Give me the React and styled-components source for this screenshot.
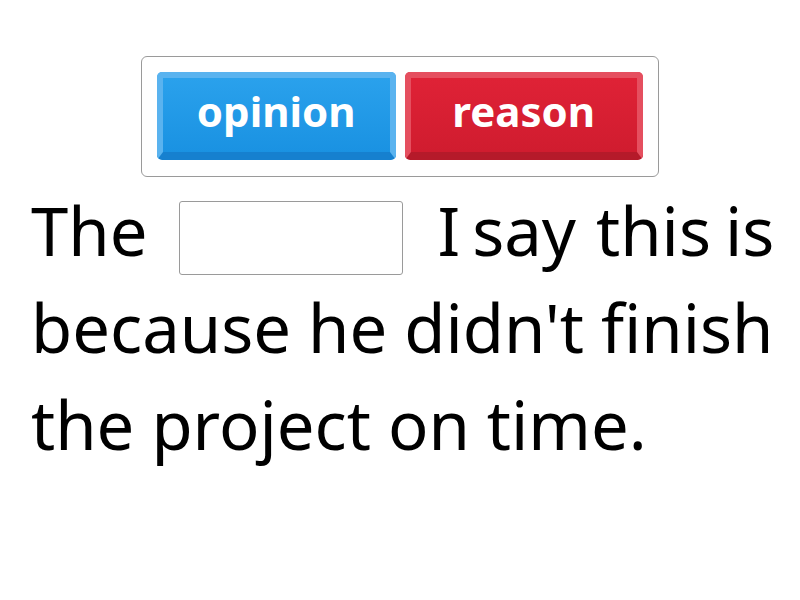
import React from "react";
import styled, { createGlobalStyle } from "styled-components";

const GlobalStyle = createGlobalStyle`
  html, body {
    margin: 0;
    padding: 0;
    background: #fff;
    font-family: "Noto Sans", "Open Sans", sans-serif;
  }
`;

const Page = styled.div`
  width: 800px;
  height: 600px;
  padding-top: 56px;
  box-sizing: border-box;
`;

const Tray = styled.div`
  width: 518px;
  height: 121px;
  margin-left: 141px;
  box-sizing: border-box;
  border: 1px solid #9a9a9a;
  border-radius: 6px;
  display: flex;
  gap: 9px;
  padding: 15px 15px 0;
`;

const palette = {
  blue: { edge: "#5ab3ef", face: "#2aa1ec", low: "#1a92e2", bottom: "#1680cf" },
  red: { edge: "#e54f5f", face: "#df2236", low: "#d01c2f", bottom: "#b51a2a" },
};

const Tile = styled.div`
  width: 239px;
  height: 88px;
  box-sizing: border-box;
  border-radius: 5px;
  border: 6px solid ${(p) => palette[p.$tone].edge};
  border-bottom: 8px solid ${(p) => palette[p.$tone].bottom};
  background: linear-gradient(
    ${(p) => palette[p.$tone].face},
    ${(p) => palette[p.$tone].low}
  );
  color: #fff;
  font-weight: 700;
  font-size: 42px;
  display: flex;
  align-items: center;
  justify-content: center;
  padding-bottom: 9px;
`;

const Sentence = styled.div`
  display: flex;
  flex-wrap: wrap;
  align-items: flex-start;
  column-gap: 17px;
  padding-left: 31px;
  margin-top: 5px;
  font-size: 67px;
  line-height: 97px;
  color: #000;
`;

const Word = styled.span`
  white-space: pre;
  margin-right: ${(p) => p.$after || 0}px;
`;

const Blank = styled.span`
  display: block;
  width: 224px;
  height: 74px;
  box-sizing: border-box;
  border: 1px solid #9a9a9a;
  border-radius: 3px;
  margin: 19px 17px 0 15px;
`;

const rest = ["because", "he", "didn't", "finish", "the", "project", "on", "time."];

export default function App() {
  return (
    <>
      <GlobalStyle />
      <Page>
        <Tray>
          <Tile $tone="blue">opinion</Tile>
          <Tile $tone="red">reason</Tile>
        </Tray>
        <Sentence>
          <Word>The</Word>
          <Blank />
          <Word $after={-5}>I</Word>
          <Word $after={3}>say</Word>
          <Word $after={-3}>this</Word>
          <Word>is</Word>
          {rest.map((w) => (
            <Word key={w}>{w}</Word>
          ))}
        </Sentence>
      </Page>
    </>
  );
}
